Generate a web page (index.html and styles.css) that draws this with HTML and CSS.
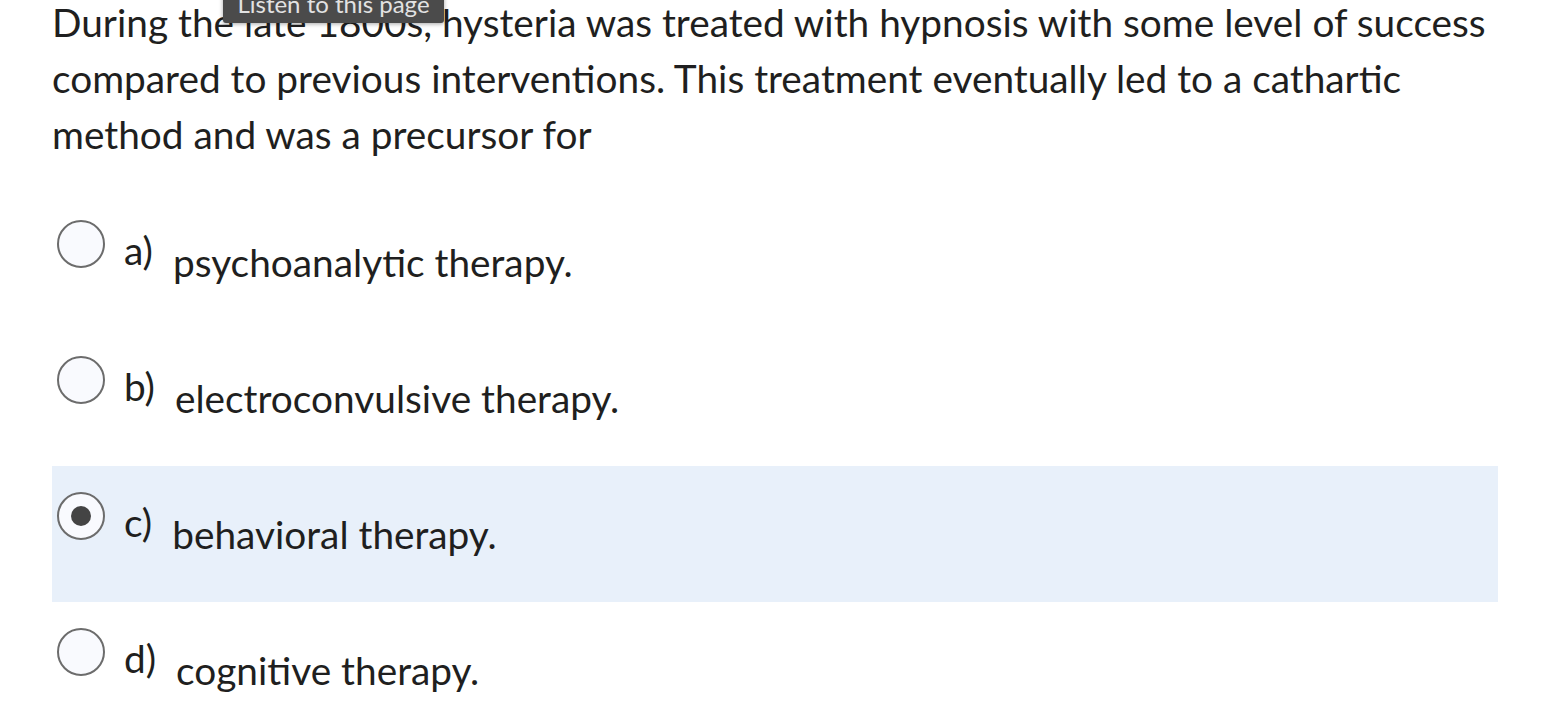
FILE: index.html
```html
<!DOCTYPE html>
<html lang="en">
  <head>
    <meta charset="UTF-8" />
    <title>Question</title>
    <link rel="stylesheet" href="styles.css">
  </head>
  <body>
    <div class="question">
      <p class="stem">
        During the late 1800s, hysteria was treated with hypnosis with some level of success
        compared to previous interventions. This treatment eventually led to a cathartic
        method and was a precursor for
      </p>
      <div class="options">
        <label class="option">
          <span class="radio"></span>
          <span class="letter">a)</span>
          <span class="answer">psychoanalytic therapy.</span>
        </label>
        <label class="option">
          <span class="radio"></span>
          <span class="letter">b)</span>
          <span class="answer">electroconvulsive therapy.</span>
        </label>
        <label class="option selected">
          <span class="radio"><span class="dot"></span></span>
          <span class="letter">c)</span>
          <span class="answer">behavioral therapy.</span>
        </label>
        <label class="option">
          <span class="radio"></span>
          <span class="letter">d)</span>
          <span class="answer">cognitive therapy.</span>
        </label>
      </div>
    </div>
    <div class="listen">Listen to this page</div>
  </body>
</html>
```

FILE: styles.css
```css
body {
  margin: 0;
  background: #fff;
  color: #1f1f20;
  font-family: Lato, "Open Sans", sans-serif;
  overflow: hidden;
}
.question {
  margin-top: -6px;
  width: 1446px;
  padding-left: 52px;
}
.stem {
  margin: 0;
  font-size: 38.8px;
  line-height: 56px;
}
.options {
  margin-top: 32px;
}
.option {
  display: flex;
  align-items: flex-start;
  height: 136px;
  padding-left: 5px;
  box-sizing: border-box;
}
.option.selected {
  background: #e8f0fa;
}
.radio {
  width: 44px;
  height: 44px;
  margin-top: 26px;
  border: 2px solid #6c6c6c;
  border-radius: 50%;
  background: #f9fafe;
  display: flex;
  align-items: center;
  justify-content: center;
  flex-shrink: 0;
}
.dot {
  width: 20px;
  height: 20px;
  border-radius: 50%;
  background: #444;
}
.letter {
  margin-left: 19px;
  margin-top: 36px;
  font-size: 38.8px;
  line-height: 40px;
}
.answer {
  margin-left: 20px;
  margin-top: 48px;
  font-size: 38.8px;
  line-height: 40px;
}
.listen {
  position: absolute;
  left: 223px;
  top: -14px;
  width: 221px;
  height: 37px;
  box-sizing: border-box;
  padding-top: 6px;
  background: #4b4b4b;
  color: #e2e2e2;
  font-size: 24px;
  line-height: 24px;
  text-align: center;
  border-radius: 0 0 3px 3px;
  box-shadow: 0 1px 4px rgba(0, 0, 0, 0.35);
  font-family: Lato, sans-serif;
}
```
